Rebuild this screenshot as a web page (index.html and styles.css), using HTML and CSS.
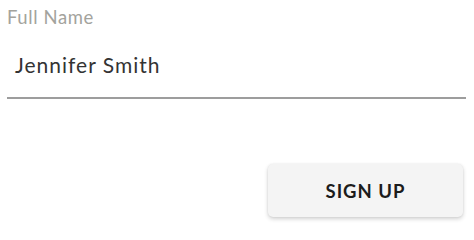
FILE: index.html
```html
<!DOCTYPE html>
<html>
<head>
<meta charset="utf-8">
<link rel="stylesheet" href="styles.css">
</head>
<body>
<div class="page">
  <div class="field">
    <label class="label">Full Name</label>
    <div class="input">Jennifer Smith</div>
  </div>
  <div class="actions">
    <button class="btn">SIGN UP</button>
  </div>
</div>
</body>
</html>
```
FILE: styles.css
```css
html, body {
  margin: 0;
  padding: 0;
  background: #ffffff;
}
.page {
  width: 474px;
  height: 226px;
  font-family: Lato, "Noto Sans", sans-serif;
  box-sizing: border-box;
  padding: 5px 8px 0 7px;
  display: flex;
  flex-direction: column;
}
.field {
  display: flex;
  flex-direction: column;
  width: 459px;
}
.label {
  font-size: 18.5px;
  line-height: 24px;
  letter-spacing: 0.6px;
  color: #a3a39d;
}
.input {
  font-size: 21px;
  line-height: 28px;
  letter-spacing: 1px;
  color: #333333;
  padding: 22px 0 18px 8px;
  border-bottom: 2px solid #9d9d9d;
}
.actions {
  display: flex;
  justify-content: flex-end;
  padding: 65px 3px 0 0;
}
.btn {
  width: 195px;
  height: 53px;
  border: none;
  border-radius: 5px;
  background: #f4f4f4;
  box-shadow: 0 2px 4px rgba(0,0,0,0.18), 0 0 2px rgba(0,0,0,0.08);
  font-family: Lato, "Noto Sans", sans-serif;
  font-size: 18.5px;
  font-weight: 700;
  color: #1c1c1c;
  letter-spacing: 1px;
  padding: 0;
}
```
